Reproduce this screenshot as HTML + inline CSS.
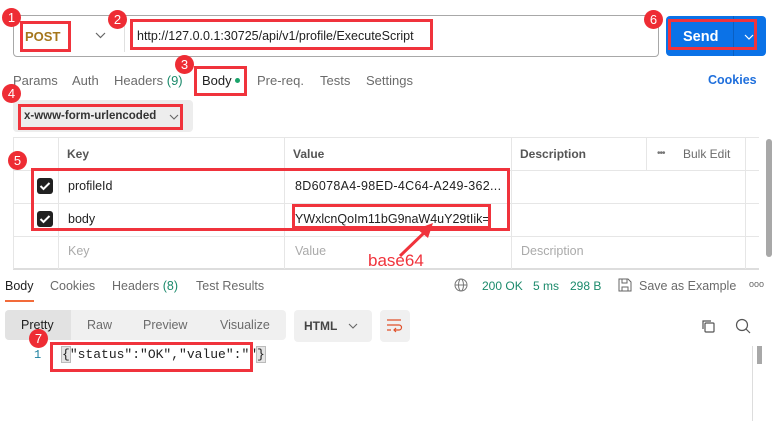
<!DOCTYPE html>
<html><head><meta charset="utf-8"><style>
*{box-sizing:border-box;margin:0;padding:0}
body{width:776px;height:421px;background:#fff;font-family:"Liberation Sans",sans-serif;font-size:13px;color:#212121;position:relative;overflow:hidden}
.a{position:absolute}
.rb{position:absolute;border:3px solid #f0333c}
.bd{position:absolute;width:19px;height:19px;border-radius:50%;background:#ee2c34;color:#fff;font-size:13px;text-align:center;line-height:19px}
.g{color:#6b6b6b}
.cb{position:absolute;width:16px;height:16px;background:#212121;border-radius:3px}
.hl{position:absolute;height:1px;background:#e6e6e6}
.vl{position:absolute;width:1px;background:#e6e6e6}
</style></head><body>
<div class="a" style="left:13px;top:15px;width:646px;height:42px;border:1px solid #a8a8a8;border-radius:4px"></div>
<div class="a" style="left:124px;top:20px;width:1px;height:32px;background:#e0e0e0"></div>
<div class="a" style="left:25px;top:29px;font-weight:bold;color:#a5761b;font-size:13px">POST</div>
<svg class="a" style="left:95px;top:32px" width="11" height="7"><path d="M1 1l4.5 4.5L10 1" stroke="#666" fill="none" stroke-width="1.2"/></svg>
<div class="rb" style="left:20px;top:21px;width:51px;height:31px"></div>
<div class="bd" style="left:2px;top:8px">1</div>
<div class="a" style="left:137px;top:29px;font-size:12.5px">http://127.0.0.1:30725/api/v1/profile/ExecuteScript</div>
<div class="rb" style="left:130px;top:19px;width:303px;height:31px"></div>
<div class="bd" style="left:108px;top:10px">2</div>
<div class="a" style="left:666px;top:16px;width:100px;height:40px;background:#0b72e7;border-radius:4px"></div>
<div class="a" style="left:733px;top:16px;width:1px;height:40px;background:#0a5fc2"></div>
<div class="a" style="left:683px;top:29px;color:#fff;font-weight:bold;font-size:14.5px">Send</div>
<svg class="a" style="left:744px;top:34px" width="10" height="6"><path d="M1 1l4 4 4-4" stroke="#fff" fill="none" stroke-width="1.2"/></svg>
<div class="rb" style="left:668px;top:19px;width:89px;height:31px"></div>
<div class="bd" style="left:644px;top:10px">6</div>
<div class="a g" style="left:13px;top:73px">Params</div>
<div class="a g" style="left:72px;top:73px">Auth</div>
<div class="a g" style="left:114px;top:73px">Headers <span style="color:#1b8a6b">(9)</span></div>
<div class="a" style="left:202px;top:73px">Body</div>
<div class="a" style="left:235px;top:78px;width:5px;height:5px;border-radius:50%;background:#1aa36a"></div>
<div class="rb" style="left:194px;top:66px;width:53px;height:30px"></div>
<div class="bd" style="left:175px;top:55px">3</div>
<div class="a g" style="left:257px;top:73px">Pre-req.</div>
<div class="a g" style="left:320px;top:73px">Tests</div>
<div class="a g" style="left:366px;top:73px">Settings</div>
<div class="a" style="left:708px;top:73px;color:#1f6fdc;font-weight:bold;font-size:12.5px">Cookies</div>
<div class="a" style="left:13px;top:100px;width:180px;height:32px;background:#ededed;border-radius:4px"></div>
<div class="a" style="left:24px;top:110px;font-weight:bold;font-size:11.5px;color:#333">x-www-form-urlencoded</div>
<svg class="a" style="left:169px;top:114px" width="10" height="6"><path d="M1 1l4 4 4-4" stroke="#666" fill="none" stroke-width="1.1"/></svg>
<div class="rb" style="left:18px;top:104px;width:165px;height:26px"></div>
<div class="bd" style="left:2px;top:84px">4</div>
<div class="hl" style="left:13px;top:137px;width:746px"></div>
<div class="hl" style="left:13px;top:170px;width:746px"></div>
<div class="hl" style="left:13px;top:203px;width:746px"></div>
<div class="hl" style="left:13px;top:236px;width:746px"></div>
<div class="hl" style="left:13px;top:268px;width:746px;background:#ddd;height:2px"></div>
<div class="vl" style="left:13px;top:137px;height:132px"></div>
<div class="vl" style="left:58px;top:137px;height:132px"></div>
<div class="vl" style="left:284px;top:137px;height:132px"></div>
<div class="vl" style="left:511px;top:137px;height:132px"></div>
<div class="vl" style="left:646px;top:137px;height:33px"></div>
<div class="vl" style="left:745px;top:137px;height:132px"></div>
<div class="a" style="left:766px;top:139px;width:6px;height:118px;background:#a8a8a8;border-radius:3px"></div>
<div class="a" style="left:67px;top:147px;font-weight:bold;font-size:12px;color:#555">Key</div>
<div class="a" style="left:293px;top:147px;font-weight:bold;font-size:12px;color:#555">Value</div>
<div class="a" style="left:520px;top:147px;font-weight:bold;font-size:12px;color:#555">Description</div>
<div class="a" style="left:657px;top:148px;font-size:10px;color:#777;letter-spacing:-1px">•••</div>
<div class="a g" style="left:683px;top:147px;font-size:12px">Bulk Edit</div>
<div class="cb" style="left:37px;top:178px"></div>
<svg class="a" style="left:39px;top:181px" width="12" height="10"><path d="M1.5 5l3 3 6-6" stroke="#fff" fill="none" stroke-width="2"/></svg>
<div class="cb" style="left:37px;top:211px"></div>
<svg class="a" style="left:39px;top:214px" width="12" height="10"><path d="M1.5 5l3 3 6-6" stroke="#fff" fill="none" stroke-width="2"/></svg>
<div class="a" style="left:68px;top:179px;font-size:12.5px">profileId</div>
<div class="a" style="left:68px;top:212px;font-size:12.5px">body</div>
<div class="a" style="left:295px;top:179px;font-size:12.5px;letter-spacing:0.3px">8D6078A4-98ED-4C64-A249-362...</div>
<div class="a" style="left:295px;top:212px;font-size:12.5px">YWxlcnQoIm11bG9naW4uY29tIik=</div>
<div class="a" style="left:68px;top:244px;font-size:12.5px;color:#aaa">Key</div>
<div class="a" style="left:295px;top:244px;font-size:12.5px;color:#aaa">Value</div>
<div class="a" style="left:521px;top:244px;font-size:12.5px;color:#aaa">Description</div>
<div class="rb" style="left:31px;top:168px;width:479px;height:63px"></div>
<div class="rb" style="left:292px;top:204px;width:199px;height:25px"></div>
<div class="bd" style="left:8px;top:151px">5</div>
<svg class="a" style="left:395px;top:220px" width="45" height="40"><path d="M5 36L32 10" stroke="#f0333c" stroke-width="3"/><path d="M38 3L22 9 33 18z" fill="#f0333c"/></svg>
<div class="a" style="left:368px;top:251px;color:#f0333c;font-size:17px">base64</div>
<div class="a" style="left:5px;top:279px;font-size:12.5px">Body</div>
<div class="a" style="left:5px;top:300px;width:29px;height:2px;background:#f26b3a"></div>
<div class="a g" style="left:50px;top:279px;font-size:12.5px">Cookies</div>
<div class="a g" style="left:112px;top:279px;font-size:12.5px">Headers <span style="color:#1b8a6b">(8)</span></div>
<div class="a g" style="left:196px;top:279px;font-size:12.5px">Test Results</div>
<svg class="a" style="left:454px;top:278px" width="14" height="14"><circle cx="7" cy="7" r="6" stroke="#777" fill="none"/><ellipse cx="7" cy="7" rx="2.5" ry="6" stroke="#777" fill="none"/><path d="M1 7h12" stroke="#777"/></svg>
<div class="a" style="left:482px;top:279px;font-size:12px;color:#1b8a6b">200 OK</div>
<div class="a" style="left:533px;top:279px;font-size:12px;color:#1b8a6b">5 ms</div>
<div class="a" style="left:570px;top:279px;font-size:12px;color:#1b8a6b">298 B</div>
<svg class="a" style="left:618px;top:278px" width="14" height="14"><path d="M1 1h9l3 3v9H1z" stroke="#666" fill="none"/><path d="M4 1v4h5V1M4 13V9h6v4" stroke="#666" fill="none"/></svg>
<div class="a g" style="left:639px;top:279px;font-size:12.5px">Save as Example</div>
<div class="a" style="left:749px;top:279px;font-size:9px;color:#666">ooo</div>
<div class="a" style="left:5px;top:310px;width:281px;height:30px;background:#f0f0f0;border-radius:4px"></div>
<div class="a" style="left:5px;top:310px;width:66px;height:30px;background:#e2e2e2;border-radius:4px 0 0 4px"></div>
<div class="a" style="left:21px;top:318px;font-size:12.5px">Pretty</div>
<div class="a g" style="left:87px;top:318px;font-size:12.5px">Raw</div>
<div class="a g" style="left:143px;top:318px;font-size:12.5px">Preview</div>
<div class="a g" style="left:220px;top:318px;font-size:12.5px">Visualize</div>
<div class="a" style="left:294px;top:310px;width:78px;height:32px;background:#f0f0f0;border-radius:4px"></div>
<div class="a" style="left:304px;top:319px;font-size:12px;font-weight:bold;color:#444">HTML</div>
<svg class="a" style="left:348px;top:323px" width="10" height="6"><path d="M1 1l4 4 4-4" stroke="#666" fill="none" stroke-width="1.1"/></svg>
<div class="a" style="left:380px;top:310px;width:30px;height:32px;background:#f0f0f0;border-radius:4px"></div>
<svg class="a" style="left:386px;top:318px" width="18" height="16"><path d="M1 2h14M1 7h12a2.5 2.5 0 0 1 0 5H8M1 12h4M10 10l-2 2 2 2" stroke="#e0502a" fill="none" stroke-width="1.2"/></svg>
<svg class="a" style="left:700px;top:318px" width="16" height="16"><rect x="5" y="5" width="9" height="9" rx="1" stroke="#555" fill="none" stroke-width="1.2"/><path d="M3 11V3h8" stroke="#555" fill="none" stroke-width="1.2"/></svg>
<svg class="a" style="left:735px;top:318px" width="17" height="17"><circle cx="7" cy="7" r="5.5" stroke="#555" fill="none" stroke-width="1.2"/><path d="M11 11l4 4" stroke="#555" stroke-width="1.2"/></svg>
<div class="a" style="left:34px;top:348px;font-family:'Liberation Mono',monospace;font-size:12px;color:#1b7f9e">1</div>
<div class="a" style="left:62px;top:347px;font-family:'Liberation Mono',monospace;font-size:13px;color:#222"><span style="background:#e4e4e4;outline:1px solid #bbb">{</span>"status":"OK","value":""<span style="background:#e4e4e4;outline:1px solid #bbb">}</span></div>
<div class="rb" style="left:50px;top:342px;width:203px;height:30px"></div>
<div class="bd" style="left:29px;top:329px">7</div>
<div class="a" style="left:752px;top:346px;width:1px;height:75px;background:#ddd"></div>
<div class="a" style="left:757px;top:346px;width:5px;height:18px;background:#a8a8a8"></div>
</body></html>
